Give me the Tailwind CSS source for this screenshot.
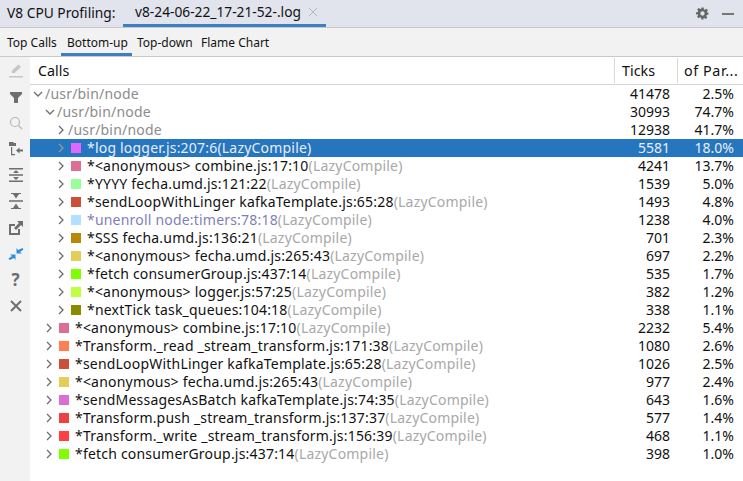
<!DOCTYPE html>
<html lang="en">
<head>
  <meta charset="UTF-8" />
  <title>V8 CPU Profiling</title>
  <script src="https://cdn.jsdelivr.net/npm/@tailwindcss/browser@4"></script>
</head>
<body class="bg-white text-[#111] font-['Noto_Sans',sans-serif] text-[14px] overflow-hidden">
  <div class="w-[743px] h-[481px] flex flex-col overflow-hidden">

    <div class="h-[28px] shrink-0 flex items-center bg-[#e1e4ec] border-b border-[#c9c9c9]">
      <span class="ml-[7px] w-[116px] text-[13.75px]">V8 CPU Profiling:</span>
      <div class="w-[203px] h-[27px] flex items-center border-b-[3px] border-[#3d7fc4] pl-[12px] gap-[8px]">
        <span class="text-[13.75px]">v8-24-06-22_17-21-52-.log</span>
        <svg width="8" height="8" viewBox="0 0 8 8" fill="none" stroke="#b5b8bf"><path d="M0 0l8 8M8 0L0 8"/></svg>
      </div>
      <svg class="ml-auto" width="13" height="13" viewBox="0 0 24 24" fill="#666"><path fill-rule="evenodd" d="M10 1h4l.6 3.200 1.800.8 2.800-1.800 2.800 2.800-1.800 2.800.8 1.800L23 10v4l-3.200.6-.8 1.800 1.800 2.800-2.800 2.800-2.800-1.800-1.800.8L14 23h-4l-.6-3.200-1.800-.8-2.800 1.800-2.800-2.800 1.800-2.800-.8-1.800L0 14v-4l3.200-.6.8-1.800L2.200 4.800 5 2l2.800 1.800 1.800-.8zM12 8a4 4 0 100 8 4 4 0 000-8z"/></svg>
      <div class="w-[12px] h-[2px] bg-[#777] ml-[13px] mr-[9px]"></div>
    </div>

    <div class="h-[29px] shrink-0 flex items-stretch bg-[#f2f2f2] border-b border-[#c9c9c9] text-[12px]">
      <div class="w-[61px] pl-[7px] flex items-center pt-[2px]">Top Calls</div>
      <div class="w-[71px] pl-[6px] flex items-center border-b-[3px] border-[#3d7fc4] pt-[4px]">Bottom-up</div>
      <div class="w-[64px] pl-[5px] flex items-center pt-[2px]">Top-down</div>
      <div class="pl-[5px] flex items-center pt-[2px]">Flame Chart</div>
    </div>

    <div class="flex flex-1 min-h-0">
      <div class="w-[30px] shrink-0 bg-[#f2f2f2] flex flex-col items-center pt-[6px] pl-[1px] gap-[10.1px]">
        <svg width="16" height="16" viewBox="0 0 16 16" fill="#c6c6c6"><path d="M10.500 1.500l2.500 2.500-6.500 6H4v-2.500zM1 13h14v1.500H1z"/></svg>
        <svg width="16" height="16" viewBox="0 0 16 16" fill="#6e6e6e"><path d="M2 3h12v2l-4 4v5H6V9L2 5z"/></svg>
        <svg width="16" height="16" viewBox="0 0 16 16" fill="none" stroke="#b5b5b5" stroke-width="1.200"><circle cx="7" cy="7" r="4.500"/><path d="M10.500 10.500L14 14"/></svg>
        <svg width="16" height="16" viewBox="0 0 16 16" fill="#6e6e6e"><path d="M1 1h4l1 1h2v3H1zM3 6h1.200v7H7v1.200H3zM8 9.500l3.500-3v2H15v2h-3.500v2z"/></svg>
        <svg width="16" height="16" viewBox="0 0 16 16" fill="#6e6e6e"><path d="M1 1h14v1.400H1zM1 13.600h14V15H1zM1 7.300h14v1.400H1zM8 3l3 3H5zM8 13l-3-3h6z"/></svg>
        <svg width="16" height="16" viewBox="0 0 16 16" fill="#6e6e6e"><path d="M1 7.300h14v1.400H1zM5 1h6L8 5.500zM5 15h6l-3-4.500zM3 0h10v1H3zM3 15h10v1H3z"/></svg>
        <svg width="16" height="16" viewBox="0 0 16 16" fill="#6e6e6e"><path d="M1 4h6v2H3v7h7V9h2v6H1zM9 1h6v6l-2-2-5 5-2-2 5-5z"/></svg>
        <svg width="16" height="16" viewBox="0 0 16 16" fill="#2f8fd8"><path d="M14.500 2l1 1.500-3.500 2.500 2 1.500H8.500V2l1.500 2zM1.500 14l-1-1.500L4 10 2 8.500h5.500V14L6 12z"/></svg>
        <span class="h-[16px] leading-[16px] text-[17px] font-bold text-[#6e6e6e]">?</span>
        <svg width="16" height="16" viewBox="0 0 16 16" fill="none" stroke="#6e6e6e" stroke-width="2"><path d="M3 3l10 10M13 3L3 13"/></svg>
      </div>

      <div class="flex-1 min-w-0 flex flex-col">
        <div class="h-[28px] shrink-0 flex items-center border-b border-[#d4d4d4] text-[14.3px]">
          <div class="flex-1 pl-[8px]">Calls</div>
          <div class="w-[63px] h-[25px] flex items-center pl-[7px] border-l border-[#d9d9d9]">Ticks</div>
          <div class="w-[66px] h-[25px] flex items-center pl-[6px] border-l border-[#d9d9d9] tracking-[0.6px]">of Par...</div>
        </div>
        <div id="rows"></div>
      </div>
    </div>
  </div>

  <script>
    const rows = [
      { x: 3, open: true, name: "/usr/bin/node", ticks: 41478, pct: "2.5%", kind: "dim" },
      { x: 15, open: true, name: "/usr/bin/node", ticks: 30993, pct: "74.7%", kind: "dim" },
      { x: 26, name: "/usr/bin/node", ticks: 12938, pct: "41.7%", kind: "dim" },
      { x: 26, c: "#e566ff", name: "*log logger.js:207:6", ticks: 5581, pct: "18.0%", kind: "sel" },
      { x: 26, c: "#dd6f95", name: "*&lt;anonymous&gt; combine.js:17:10", ticks: 4241, pct: "13.7%" },
      { x: 26, c: "#99ff99", name: "*YYYY fecha.umd.js:121:22", ticks: 1539, pct: "5.0%" },
      { x: 26, c: "#cc4f3a", name: "*sendLoopWithLinger kafkaTemplate.js:65:28", ticks: 1493, pct: "4.8%" },
      { x: 26, c: "#b3e0ff", name: "*unenroll node:timers:78:18", ticks: 1238, pct: "4.0%", kind: "node" },
      { x: 26, c: "#b8860b", name: "*SSS fecha.umd.js:136:21", ticks: 701, pct: "2.3%" },
      { x: 26, c: "#e3cf57", name: "*&lt;anonymous&gt; fecha.umd.js:265:43", ticks: 697, pct: "2.2%" },
      { x: 26, c: "#7fff00", name: "*fetch consumerGroup.js:437:14", ticks: 535, pct: "1.7%" },
      { x: 26, c: "#bfff40", name: "*&lt;anonymous&gt; logger.js:57:25", ticks: 382, pct: "1.2%" },
      { x: 26, c: "#8b8b00", name: "*nextTick task_queues:104:18", ticks: 338, pct: "1.1%" },
      { x: 14, c: "#dd6f95", name: "*&lt;anonymous&gt; combine.js:17:10", ticks: 2232, pct: "5.4%" },
      { x: 14, c: "#ff7f50", name: "*Transform._read _stream_transform.js:171:38", ticks: 1080, pct: "2.6%" },
      { x: 14, c: "#cc4f3a", name: "*sendLoopWithLinger kafkaTemplate.js:65:28", ticks: 1026, pct: "2.5%" },
      { x: 14, c: "#e3cf57", name: "*&lt;anonymous&gt; fecha.umd.js:265:43", ticks: 977, pct: "2.4%" },
      { x: 14, c: "#da70d6", name: "*sendMessagesAsBatch kafkaTemplate.js:74:35", ticks: 643, pct: "1.6%" },
      { x: 14, c: "#ee4040", name: "*Transform.push _stream_transform.js:137:37", ticks: 577, pct: "1.4%" },
      { x: 14, c: "#ff4040", name: "*Transform._write _stream_transform.js:156:39", ticks: 468, pct: "1.1%" },
      { x: 14, c: "#7fff00", name: "*fetch consumerGroup.js:437:14", ticks: 398, pct: "1.0%" }
    ];

    document.getElementById("rows").innerHTML = rows.map(r => {
      const sel = r.kind === "sel";
      const rowCls = sel ? "bg-[#2675bf] text-[#e8eef5]" : "text-[#111]";
      const nameCls = r.kind === "dim" ? "text-[#8c8c8c]" : r.kind === "node" ? "text-[#7f7fb8]" : "";
      const chev = r.open ? "M1 3l4 4 4-4" : "M3 1l4 4-4 4";
      const tag = r.kind === "dim" ? "" : `<span class="tracking-[0.2px] leading-[16px] ${sel ? "" : "text-[#a8a8a8]"}">(LazyCompile)</span>`;
      const swatch = r.c ? `<span class="w-[10px] h-[10px] shrink-0 ml-[5px] mr-[6px]" style="background:${r.c}"></span>` : `<span class="w-[2px] shrink-0"></span>`;
      return `<div class="h-[18px] flex items-center whitespace-nowrap ${rowCls}">
        <div class="flex-1 min-w-0 flex items-center" style="padding-left:${r.x}px">
          <svg class="shrink-0" width="10" height="10" viewBox="0 0 10 10" fill="none" stroke="${sel ? "#9a9a9a" : "#6e6e6e"}" stroke-width="1.300"><path d="${chev}"/></svg>
          ${swatch}<span class="tracking-[0.2px] leading-[16px] ${nameCls}">${r.name}</span>${tag}
        </div>
        <div class="w-[63px] text-right pr-[7px] leading-[16px]">${r.ticks}</div>
        <div class="w-[66px] text-right pr-[9px] leading-[16px]">${r.pct}</div>
      </div>`;
    }).join("");
  </script>
</body>
</html>
